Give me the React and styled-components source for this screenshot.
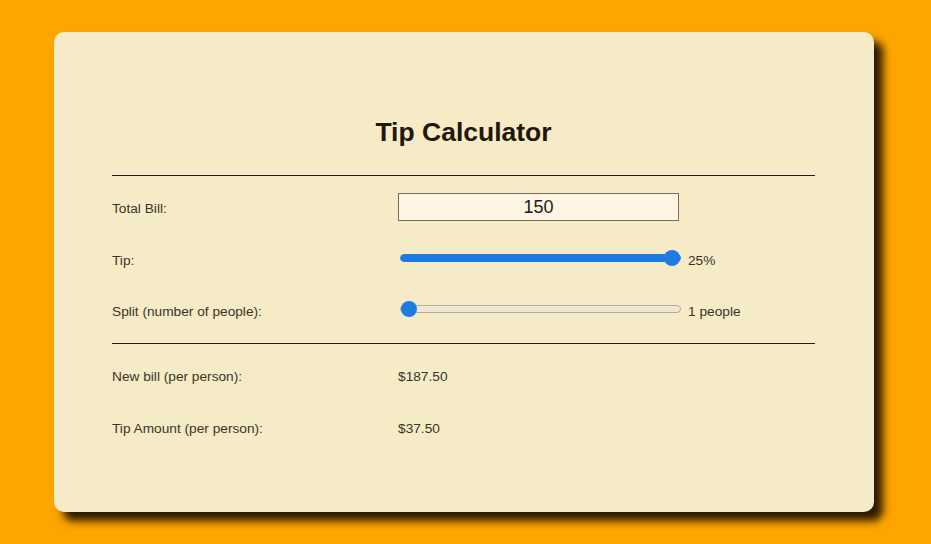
import React, { useState } from "react";
import styled, { createGlobalStyle } from "styled-components";

const Global = createGlobalStyle`
  html, body { margin: 0; padding: 0; background: #FFA500; }
  body { font-family: "Liberation Sans", Arial, sans-serif; min-height: 544px; }
`;

const Page = styled.div`
  padding: 32px 0 0 54px;
`;

const Card = styled.div`
  width: 820px;
  height: 480px;
  box-sizing: border-box;
  background: #F5EBC6;
  border-radius: 10px;
  box-shadow: 9px 9px 9px rgba(20, 10, 0, 0.9);
  padding: 86px 59px 0 58px;
`;

const Title = styled.h1`
  margin: 0 0 28px;
  font-size: 26.5px;
  line-height: 29px;
  font-weight: 700;
  text-align: center;
  color: #23170a;
`;

const Rule = styled.div`
  height: 1px;
  background: #1e1a14;
`;

const Section = styled.div`
  padding: ${(p) => (p.$tight ? "6px 0 8px" : "6px 0")};
`;

const Row = styled.div`
  display: grid;
  grid-template-columns: 286px 1fr;
  align-items: center;
  height: ${(p) => p.$h || 52}px;
  font-size: 13.7px;
  color: #3b3527;
`;

const Label = styled.span`
  padding-top: ${(p) => p.$dy || 0}px;
`;

const Control = styled.div`
  display: flex;
  align-items: center;
`;

const BillInput = styled.input`
  width: 281px;
  height: 28px;
  box-sizing: border-box;
  border: 1px solid #7b6c57;
  background: #FFF5E5;
  font-family: "Liberation Sans", Arial, sans-serif;
  font-size: 18px;
  color: #1f1a14;
  text-align: center;
  padding: 0;
  margin: 0 0 1px;
  outline: none;
`;

const Range = styled.input`
  -webkit-appearance: none;
  appearance: none;
  width: 281px;
  height: 16px;
  margin: 0 0 2px 2px;
  background: transparent;
  &::-webkit-slider-runnable-track {
    height: 8px;
    box-sizing: border-box;
    border-radius: 4px;
    border: 1px solid ${(p) => (p.$pct >= 100 ? "#1c7ce2" : "#b9ad96")};
    background: linear-gradient(
      to right,
      #1c7ce2 0,
      #1c7ce2 ${(p) => p.$pct}%,
      #efe6d4 ${(p) => p.$pct}%,
      #efe6d4 100%
    );
  }
  &::-webkit-slider-thumb {
    -webkit-appearance: none;
    appearance: none;
    width: 16px;
    height: 16px;
    border-radius: 50%;
    background: #1c7ce2;
    margin-top: -5px;
    border: none;
  }
`;

const RangeValue = styled.span`
  margin-left: 7px;
  padding-top: 4px;
  font-size: 13.7px;
  color: #3b3527;
`;

export default function App() {
  const [bill, setBill] = useState("150");
  const [tip, setTip] = useState(25);
  const [split, setSplit] = useState(1);
  const b = parseFloat(bill) || 0;
  const tipAmount = (b * tip) / 100 / split;
  const newBill = (b + (b * tip) / 100) / split;
  const tipPct = (tip / 25) * 100;
  const splitPct = ((split - 1) / 9) * 100;

  return (
    <>
      <Global />
      <Page>
        <Card>
          <Title>Tip Calculator</Title>
          <Rule />
          <Section $tight>
            <Row $h={51}>
              <Label $dy={2}>Total Bill:</Label>
              <Control>
                <BillInput value={bill} onChange={(e) => setBill(e.target.value)} />
              </Control>
            </Row>
            <Row $h={51}>
              <Label $dy={3}>Tip:</Label>
              <Control>
                <Range
                  type="range"
                  min="0"
                  max="25"
                  value={tip}
                  $pct={tipPct}
                  onChange={(e) => setTip(Number(e.target.value))}
                />
                <RangeValue>{tip}%</RangeValue>
              </Control>
            </Row>
            <Row $h={51}>
              <Label $dy={3}>Split (number of people):</Label>
              <Control>
                <Range
                  type="range"
                  min="1"
                  max="10"
                  value={split}
                  $pct={splitPct}
                  onChange={(e) => setSplit(Number(e.target.value))}
                />
                <RangeValue>{split} people</RangeValue>
              </Control>
            </Row>
          </Section>
          <Rule />
          <Section>
            <Row>
              <Label $dy={1}>New bill (per person):</Label>
              <Label $dy={1}>${newBill.toFixed(2)}</Label>
            </Row>
            <Row>
              <Label>Tip Amount (per person):</Label>
              <span>${tipAmount.toFixed(2)}</span>
            </Row>
          </Section>
        </Card>
      </Page>
    </>
  );
}
